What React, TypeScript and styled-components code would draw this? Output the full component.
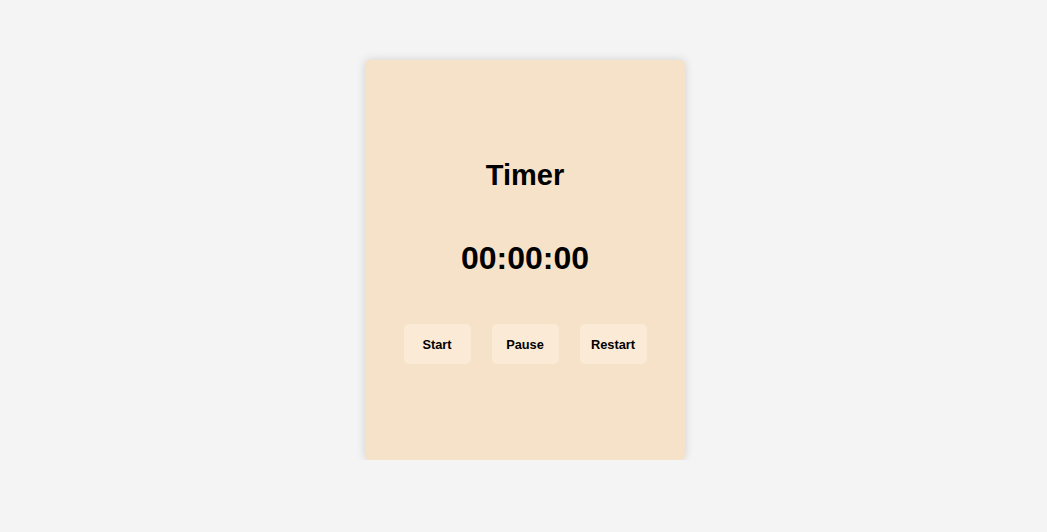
import React from "react"
import styled, { createGlobalStyle } from "styled-components"

const GlobalStyle = createGlobalStyle`
  html, body {
    margin: 0;
    padding: 0;
    background-color: #f4f4f4;
    font-family: "Liberation Sans", Arial, sans-serif;
  }
`

export default function App() {
  return (
    <>
      <GlobalStyle />
      <Page>
        <Card>
          <Title>Timer</Title>
          <Clock>00:00:00</Clock>
          <Controls>
            <Button>Start</Button>
            <Button>Pause</Button>
            <Button>Restart</Button>
          </Controls>
        </Card>
      </Page>
    </>
  )
}

const Page = styled.div`
  display: flex;
  justify-content: center;
  padding: 60px 0 0 3px;
`

const Card = styled.div`
  display: flex;
  flex-direction: column;
  align-items: center;
  justify-content: center;
  width: 320px;
  height: 400px;
  padding-top: 3px;
  box-sizing: border-box;
  background-color: #f5e2c8;
  border-radius: 5px;
  box-shadow: 0 0 10px rgba(0, 0, 0, 0.15);
`

const Title = styled.h1`
  margin: 0 0 48px;
  font-size: 29px;
  font-weight: bold;
  color: #000;
`

const Clock = styled.div`
  margin-bottom: 47px;
  font-size: 32px;
  font-weight: bold;
  color: #000;
`

const Controls = styled.div`
  display: flex;
  gap: 21px;
`

const Button = styled.button`
  width: 67px;
  height: 40px;
  padding: 0;
  border: none;
  border-radius: 5px;
  background-color: #fbead6;
  font-family: "Liberation Sans", Arial, sans-serif;
  font-size: 12.8px;
  font-weight: bold;
  color: #000;
  cursor: pointer;
`
